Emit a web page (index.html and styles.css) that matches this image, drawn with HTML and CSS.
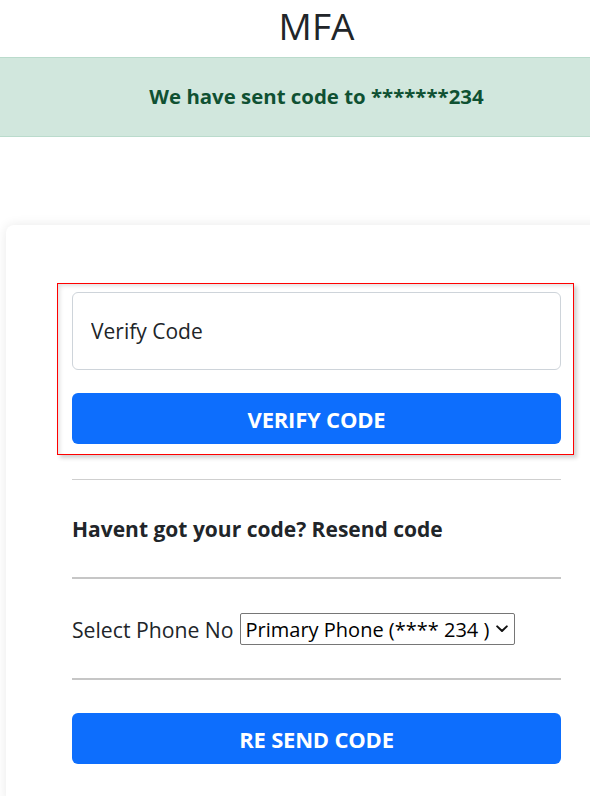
FILE: index.html
```html
<!DOCTYPE html>
<html lang="en">
<head>
<meta charset="utf-8">
<title>MFA</title>
<link rel="stylesheet" href="styles.css">
</head>
<body>
<div class="page">
  <h1 class="title">MFA</h1>
  <div class="alert"><span class="alert-text">We have sent code to *******234</span></div>
  <div class="card">
    <div class="verify-box">
      <input class="code-input" type="text" placeholder="Verify Code">
      <button class="btn" type="button">VERIFY CODE</button>
    </div>
    <hr class="divider divider-thin">
    <p class="resend-text">Havent got your code? Resend code</p>
    <hr class="divider">
    <div class="phone-row">
      <label class="phone-label" for="phone">Select Phone No</label>
      <span class="select-wrap">
        <select id="phone" class="phone-select">
          <option>Primary Phone (**** 234 )</option>
        </select>
        <svg class="chevron" width="12" height="8" viewBox="0 0 12 8" aria-hidden="true">
          <path d="M1.2 1.4 L6 6 L10.8 1.4" fill="none" stroke="#111" stroke-width="2" stroke-linecap="round" stroke-linejoin="round"/>
        </svg>
      </span>
    </div>
    <hr class="divider">
    <button class="btn btn-resend" type="button">RE SEND CODE</button>
  </div>
</div>
</body>
</html>
```

FILE: styles.css
```css
html, body {
  margin: 0;
  padding: 0;
  overflow: hidden;
  background: #fff;
}

body {
  font-family: "Open Sans", "Noto Sans", "Liberation Sans", sans-serif;
  color: #212529;
}

.page {
  width: 633px;
}

.title {
  width: fit-content;
  margin: 0 auto 6px;
  font-size: 37px;
  line-height: 51px;
  font-weight: 400;
  color: #212529;
}

.alert {
  display: flex;
  justify-content: center;
  background: #d1e7dd;
  border-top: 1px solid #badbcc;
  border-bottom: 1px solid #badbcc;
  color: #0f5132;
  font-weight: 700;
  font-size: 20.4px;
  line-height: 27px;
  padding: 25px 0 26px;
}

.card {
  margin: 88px 6px 0;
  padding: 58px 66px 40px;
  background: #fff;
  border-radius: 8px;
  box-shadow: 0 0 12px rgba(0, 0, 0, 0.09);
}

.verify-box {
  margin: 0 -13px 0 -15px;
  padding: 8px 12px 10px 14px;
  border: 1px solid #ff0000;
  box-shadow: inset 3px 3px 4px -1px rgba(0, 0, 0, 0.12), 3px 3px 4px rgba(0, 0, 0, 0.18);
  display: flex;
  flex-direction: column;
  gap: 23px;
}

.code-input {
  box-sizing: border-box;
  width: 100%;
  height: 78px;
  margin: 0;
  padding: 0 18px;
  border: 1px solid #ced4da;
  border-radius: 6px;
  font-family: inherit;
  font-size: 21px;
  color: #212529;
  background: #fff;
  outline: none;
}

.code-input::placeholder {
  color: #212529;
  opacity: 1;
}

.btn {
  box-sizing: border-box;
  display: block;
  width: 100%;
  height: 51px;
  margin: 0;
  padding: 0;
  border: none;
  border-radius: 6px;
  background: #0d6efd;
  color: #fff;
  font-family: inherit;
  font-size: 22px;
  font-weight: 700;
  letter-spacing: -0.2px;
}

.divider {
  margin: 33px 0 0;
  border: 0;
  height: 2px;
  background: #c6c6c6;
}

.divider-thin {
  margin-top: 24px;
  height: 1px;
  background: #cfcfcf;
}

.resend-text {
  margin: 34px 0 0;
  font-size: 21px;
  line-height: 30px;
  font-weight: 700;
  color: #212529;
}

.phone-row {
  margin-top: 34px;
  display: flex;
  align-items: center;
  gap: 6px;
  height: 32px;
}

.phone-label {
  font-size: 21.2px;
  color: #212529;
}

.select-wrap {
  box-sizing: border-box;
  display: inline-flex;
  align-items: center;
  height: 32px;
  padding: 0 6px 0 5px;
  border: 1px solid #767676;
  border-radius: 2px;
  background: #fff;
}

.phone-select {
  appearance: none;
  -webkit-appearance: none;
  border: none;
  background: transparent;
  margin: 0;
  padding: 0 6px 0 0;
  font-family: inherit;
  font-size: 20px;
  color: #000;
  outline: none;
}

.chevron {
  display: block;
}

.btn-resend {
  margin-top: 33px;
}
```
